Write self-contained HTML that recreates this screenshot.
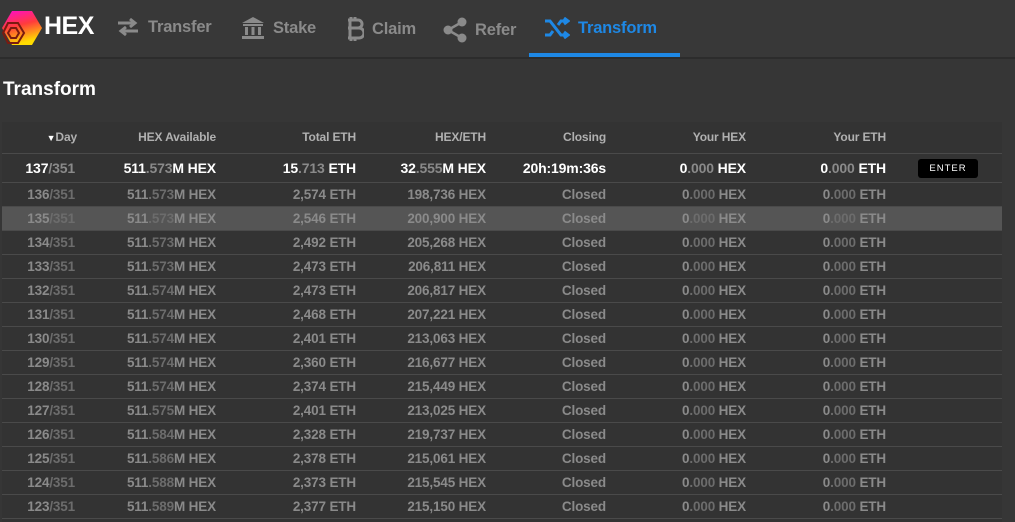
<!DOCTYPE html>
<html><head><style>
body{margin:0;width:1015px;height:513px;overflow:hidden;background:#363636;font-family:"Liberation Sans",Arial,sans-serif;}
.nav{height:57px;background:#383838;border-bottom:2px solid #2c2c2c;position:relative;}
.nav .it{position:absolute;top:17px;font-size:16.5px;font-weight:bold;color:#8a8a8a;display:flex;align-items:center;letter-spacing:-0.2px}
.nav svg{margin-right:8px}
.ul{position:absolute;left:529px;width:151px;top:53px;height:4px;background:#1e88e5}
h1{position:absolute;left:3px;top:79px;margin:0;font-size:19px;color:#fff;}
.tbl{position:absolute;left:2px;top:122px;width:1000px;height:400px;background:#333;}
.row{position:relative;height:24px;border-bottom:1px solid #4a4a4a;font-size:13.5px;font-weight:bold;color:#8a8a8a;box-sizing:border-box;letter-spacing:-0.15px}
.row span{position:absolute;top:4px;text-align:right;white-space:nowrap}
.hd{height:32px;font-size:12px;color:#b0b0b0}
.hd span{top:8px}
.r1{height:29px;color:#fff;font-size:14px}
.r1 span{top:6px}
.hl{background:#555}
.d{color:#6c6c6c}
.r1 .d{color:#8a8a8a}
.btn{position:absolute;left:916px;top:5px;width:60px;height:19px;background:#000;border-radius:3px;color:#fff;font-size:9.5px;letter-spacing:1px;text-align:center;line-height:19px;font-weight:normal}
</style></head><body>
<div class="nav">
<svg style="position:absolute;left:2px;top:11px" width="40" height="34" viewBox="0 0 40 34"><defs><linearGradient id="g" x1="0" y1="0" x2="0.3" y2="1"><stop offset="0" stop-color="#ff0bd0"/><stop offset="0.5" stop-color="#ff3c3c"/><stop offset="1" stop-color="#ffdb00"/></linearGradient></defs><polygon points="10,0 30,0 40,17 30,34 10,34 0,17" fill="url(#g)"/><polygon points="6,12 16,12 22,22 16,32 6,32 1,22" fill="none" stroke="#7a1a10" stroke-width="2"/><polygon points="9,17 14,17 17,22 14,27 9,27 6,22" fill="none" stroke="#7a1a10" stroke-width="2"/></svg>
<div class="it" style="left:44px;top:12px;font-size:25px;color:#fff;letter-spacing:-0.5px">HEX</div>
<div class="it" style="left:116px"><svg width="24" height="20" viewBox="0 0 24 20"><path d="M2 6h16M14 2l5 4-5 4M22 14H6M10 10l-5 4 5 4" stroke="#8a8a8a" stroke-width="3" fill="none"/></svg>Transfer</div>
<div class="it" style="left:241px"><svg width="24" height="22" viewBox="0 0 24 22"><path d="M12 0L1 6h22z M2 7h20v2H2z M4 10h3v8H4z M10.5 10h3v8h-3z M17 10h3v8h-3z M1 19h22v3H1z" fill="#8a8a8a"/></svg>Stake</div>
<div class="it" style="left:346px"><svg width="18" height="24" viewBox="0 0 18 24"><path d="M5 0v3M9 0v3M5 21v3M9 21v3M2 3h10a4 4 0 010 8H2M2 11h11a5 5 0 010 10H2M4 3v18" stroke="#8a8a8a" stroke-width="3" fill="none"/></svg>Claim</div>
<div class="it" style="left:443px"><svg width="24" height="26" viewBox="0 0 24 26"><circle cx="19" cy="5" r="4.5" fill="#8a8a8a"/><circle cx="5" cy="13" r="4.5" fill="#8a8a8a"/><circle cx="19" cy="21" r="4.5" fill="#8a8a8a"/><path d="M19 5L5 13l14 8" stroke="#8a8a8a" stroke-width="2.5" fill="none"/></svg>Refer</div>
<div class="it" style="left:544px;color:#1e88e5"><svg width="26" height="22" viewBox="0 0 26 22"><path d="M1 4h5l11 14h6M1 18h5l3-4M14 8l3-4h6M20 1l4 3-4 3M20 15l4 3-4 3" stroke="#1e88e5" stroke-width="3" fill="none"/></svg>Transform</div>
<div class="ul"></div>
</div>
<h1>Transform</h1>
<div class="tbl" id="t">
<div class="row hd"><span style="right:925px"><span style="position:static;font-size:9px;color:#fff">&#9660;</span>Day</span><span style="right:786px">HEX Available</span><span style="right:646px">Total ETH</span><span style="right:516px">HEX/ETH</span><span style="right:396px">Closing</span><span style="right:256px">Your HEX</span><span style="right:116px">Your ETH</span></div>
<div class="row r1"><span style="right:927px">137<span class="d" style="position:static">/351</span></span><span style="right:786px">511<span class="d" style="position:static">.573</span>M HEX</span><span style="right:646px">15<span class="d" style="position:static">.713</span> ETH</span><span style="right:516px">32<span class="d" style="position:static">.555</span>M HEX</span><span style="right:396px">20h:19m:36s</span><span style="right:256px">0<span class="d" style="position:static">.000</span> HEX</span><span style="right:116px">0<span class="d" style="position:static">.000</span> ETH</span><div class="btn">ENTER</div></div>
</div>
<script>
var d=[[136,573,"2,574","198,736"],[135,573,"2,546","200,900"],[134,573,"2,492","205,268"],[133,573,"2,473","206,811"],[132,574,"2,473","206,817"],[131,574,"2,468","207,221"],[130,574,"2,401","213,063"],[129,574,"2,360","216,677"],[128,574,"2,374","215,449"],[127,575,"2,401","213,025"],[126,584,"2,328","219,737"],[125,586,"2,378","215,061"],[124,588,"2,373","215,545"],[123,589,"2,377","215,150"]];
var h="";d.forEach(function(r){h+='<div class="row'+(r[0]==135?' hl':'')+'"><span style="right:927px">'+r[0]+'<span class="d" style="position:static">/351</span></span><span style="right:786px">511<span class="d" style="position:static">.'+r[1]+'</span>M HEX</span><span style="right:646px">'+r[2]+' ETH</span><span style="right:516px">'+r[3]+' HEX</span><span style="right:396px">Closed</span><span style="right:256px">0<span class="d" style="position:static">.000</span> HEX</span><span style="right:116px">0<span class="d" style="position:static">.000</span> ETH</span></div>';});
document.getElementById("t").insertAdjacentHTML("beforeend",h);
</script>
</body></html>
